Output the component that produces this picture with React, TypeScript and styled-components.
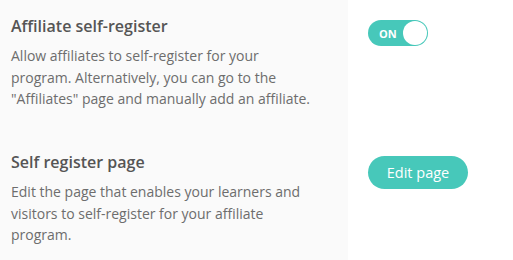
import React from "react";
import styled, { createGlobalStyle } from "styled-components";

const Global = createGlobalStyle`
  html, body { margin: 0; padding: 0; background: #ffffff; }
  body { font-family: "Open Sans", "Noto Sans", sans-serif; -webkit-font-smoothing: antialiased; }
`;

const Page = styled.div`
  display: grid;
  grid-template-columns: 348px 1fr;
  grid-template-rows: 136px 1fr;
  width: 513px;
  height: 260px;
  overflow: hidden;
`;

const Info = styled.div`
  background: #fafafa;
  padding: 15px 10px 0 11px;
`;

const Control = styled.div`
  padding: 20px 0 0 20px;
`;

const Title = styled.h2`
  margin: 0 0 8px;
  font-size: 16px;
  font-weight: 600;
  line-height: 22px;
  color: #555555;
`;

const Desc = styled.p`
  margin: 0;
  max-width: 308px;
  font-size: 14px;
  line-height: 21.5px;
  color: #6d6d6d;
`;

const Toggle = styled.button`
  display: flex;
  align-items: center;
  justify-content: space-between;
  box-sizing: border-box;
  width: 60px;
  height: 26px;
  padding: 0 1px 0 11px;
  border: none;
  border-radius: 13px;
  background: #47c8ba;
  cursor: pointer;
`;

const ToggleLabel = styled.span`
  font-family: "Open Sans", sans-serif;
  font-size: 11px;
  font-weight: 700;
  color: #ffffff;
`;

const Knob = styled.span`
  width: 24px;
  height: 24px;
  border-radius: 50%;
  background: #ffffff;
`;

const Button = styled.button`
  box-sizing: border-box;
  width: 100px;
  height: 33px;
  border: none;
  border-radius: 17px;
  background: #47c8ba;
  color: #ffffff;
  font-family: "Open Sans", sans-serif;
  font-size: 14.5px;
  cursor: pointer;
`;

export default function App() {
  return (
    <>
      <Global />
      <Page>
        <Info>
          <Title>Affiliate self-register</Title>
          <Desc>
            Allow affiliates to self-register for your program. Alternatively, you can go to the
            "Affiliates" page and manually add an affiliate.
          </Desc>
        </Info>
        <Control>
          <Toggle>
            <ToggleLabel>ON</ToggleLabel>
            <Knob />
          </Toggle>
        </Control>
        <Info>
          <Title>Self register page</Title>
          <Desc>
            Edit the page that enables your learners and visitors to self-register for your
            affiliate program.
          </Desc>
        </Info>
        <Control>
          <Button>Edit page</Button>
        </Control>
      </Page>
    </>
  );
}
